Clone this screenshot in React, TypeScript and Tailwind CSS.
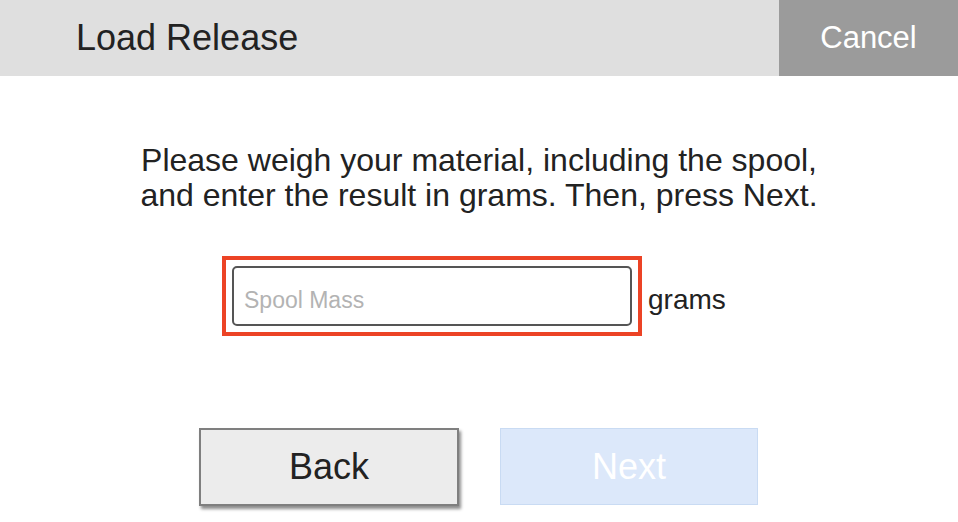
export default function App() {
  return (
    <div
      className="w-[958px] h-[522px] bg-white flex flex-col overflow-hidden"
      style={{ fontFamily: '"Liberation Sans", Arial, sans-serif' }}
    >
      <header className="h-[76px] flex bg-[#dfdfdf] shrink-0">
        <h1 className="flex-1 pl-[76px] pb-[1px] flex items-center text-[36px] text-[#222]">
          Load Release
        </h1>
        <button className="w-[179px] bg-[#9b9b9b] text-white text-[31px] flex items-center justify-center">
          Cancel
        </button>
      </header>

      <p className="mt-[67px] text-center text-[32px] leading-[35px] text-[#222]">
        Please weigh your material, including the spool,
        <br />
        and enter the result in grams. Then, press Next.
      </p>

      <div className="mt-[43px] flex items-center pl-[222px]">
        <div className="w-[420px] h-[80px] border-4 border-[#ec4325] p-[6px] flex">
          <input
            placeholder="Spool Mass"
            className="flex-1 border-2 border-[#555] rounded-[5px] px-[10px] pt-[9px] text-[23px] text-[#222] placeholder:text-[#b3b3b3] outline-none"
          />
        </div>
        <span className="ml-[6px] pt-[7px] text-[28px] text-[#222]">grams</span>
      </div>

      <div className="mt-[92px] flex pl-[199px] gap-[41px]">
        <button className="w-[260px] h-[78px] bg-[#ececec] border-2 border-[#7f7f7f] shadow-[2px_3px_3px_rgba(0,0,0,0.45)] text-[36px] text-[#222]">
          Back
        </button>
        <button className="w-[258px] h-[77px] bg-[#dce8fa] border border-[#c9dbf3] text-[36px] text-white">
          Next
        </button>
      </div>
    </div>
  );
}
